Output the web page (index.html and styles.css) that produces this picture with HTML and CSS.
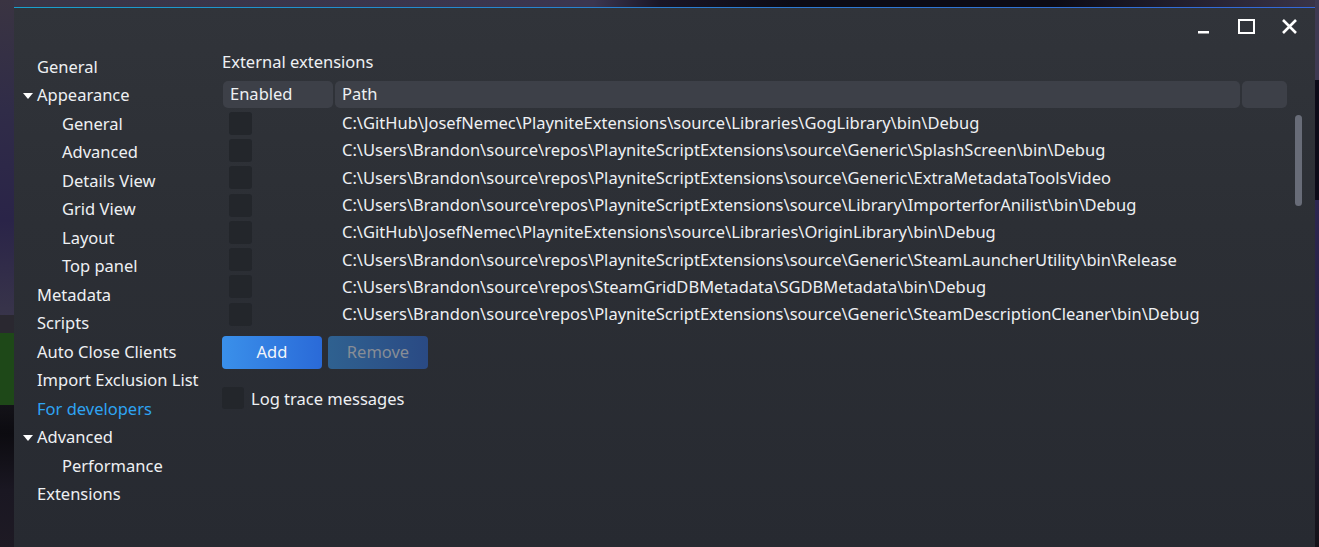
FILE: index.html
```html
<!DOCTYPE html>
<html>
<head>
<meta charset="utf-8">
<link rel="stylesheet" href="styles.css">
</head>
<body>
<div class="wall">
  <div class="wall-left">
    <div class="wl-a"></div><div class="wl-b"></div><div class="wl-c"></div><div class="wl-d"></div>
  </div>
  <div class="window">
    <div class="topline"></div>
    <div class="titlebar">
      <svg class="tb-icon" width="20" height="20" viewBox="0 0 20 20"><rect x="4" y="15" width="11" height="2.5" fill="#fff"/></svg>
      <svg class="tb-icon" width="20" height="20" viewBox="0 0 20 20"><rect x="2" y="4" width="15" height="13" fill="none" stroke="#fff" stroke-width="2"/></svg>
      <svg class="tb-icon" width="20" height="20" viewBox="0 0 20 20"><path d="M3 4 L16 17 M16 4 L3 17" stroke="#fff" stroke-width="2.6" fill="none"/></svg>
    </div>
    <div class="body">
      <nav class="sidebar">
        <div class="item l1">General</div>
        <div class="item l1 exp"><span class="caret"></span>Appearance</div>
        <div class="item l2">General</div>
        <div class="item l2">Advanced</div>
        <div class="item l2">Details View</div>
        <div class="item l2">Grid View</div>
        <div class="item l2">Layout</div>
        <div class="item l2">Top panel</div>
        <div class="item l1">Metadata</div>
        <div class="item l1">Scripts</div>
        <div class="item l1">Auto Close Clients</div>
        <div class="item l1">Import Exclusion List</div>
        <div class="item l1 sel">For developers</div>
        <div class="item l1 exp"><span class="caret"></span>Advanced</div>
        <div class="item l2">Performance</div>
        <div class="item l1">Extensions</div>
      </nav>
      <main class="main">
        <div class="section-title">External extensions</div>
        <div class="table-wrap">
          <div class="table">
            <div class="thead">
              <div class="th c1">Enabled</div>
              <div class="th c2">Path</div>
              <div class="th c3"></div>
            </div>
            <div class="row"><div class="c1"><span class="cb"></span></div><div class="c2">C:\GitHub\JosefNemec\PlayniteExtensions\source\Libraries\GogLibrary\bin\Debug</div></div>
            <div class="row"><div class="c1"><span class="cb"></span></div><div class="c2">C:\Users\Brandon\source\repos\PlayniteScriptExtensions\source\Generic\SplashScreen\bin\Debug</div></div>
            <div class="row"><div class="c1"><span class="cb"></span></div><div class="c2">C:\Users\Brandon\source\repos\PlayniteScriptExtensions\source\Generic\ExtraMetadataToolsVideo</div></div>
            <div class="row"><div class="c1"><span class="cb"></span></div><div class="c2">C:\Users\Brandon\source\repos\PlayniteScriptExtensions\source\Library\ImporterforAnilist\bin\Debug</div></div>
            <div class="row"><div class="c1"><span class="cb"></span></div><div class="c2">C:\GitHub\JosefNemec\PlayniteExtensions\source\Libraries\OriginLibrary\bin\Debug</div></div>
            <div class="row"><div class="c1"><span class="cb"></span></div><div class="c2">C:\Users\Brandon\source\repos\PlayniteScriptExtensions\source\Generic\SteamLauncherUtility\bin\Release</div></div>
            <div class="row"><div class="c1"><span class="cb"></span></div><div class="c2">C:\Users\Brandon\source\repos\SteamGridDBMetadata\SGDBMetadata\bin\Debug</div></div>
            <div class="row"><div class="c1"><span class="cb"></span></div><div class="c2">C:\Users\Brandon\source\repos\PlayniteScriptExtensions\source\Generic\SteamDescriptionCleaner\bin\Debug</div></div>
          </div>
          <div class="scrolltrack"><div class="thumb"></div></div>
        </div>
        <div class="buttons">
          <button class="btn add">Add</button>
          <button class="btn remove">Remove</button>
        </div>
        <label class="check"><span class="cb big"></span>Log trace messages</label>
      </main>
    </div>
  </div>
  <div class="wall-right">
    <div class="wr-a"></div><div class="wr-b"></div><div class="wr-c"></div>
  </div>
</div>
</body>
</html>
```
FILE: styles.css
```css
html, body {
  margin: 0;
  padding: 0;
  width: 1319px;
  height: 547px;
  overflow: hidden;
  background: #2c2838;
  font-family: "Noto Sans", "Open Sans", sans-serif;
}
.wall {
  display: flex;
  width: 1319px;
  height: 547px;
  background: linear-gradient(90deg, #3a3546 0%, #3b3650 45%, #1a1626 50%, #0c0b15 60%, #0c0b15 80%, #3a3548 100%);
}
.wall-left {
  width: 14px;
  display: flex;
  flex-direction: column;
}
.wl-a { height: 315px; background: linear-gradient(180deg, #3a3442 0%, #302c48 35%, #2a2448 70%, #38344a 100%); }
.wl-b { height: 18px; background: #2a2830; }
.wl-c { height: 72px; background: #1e4818; }
.wl-d { flex: 1; background: linear-gradient(180deg, #131218 0%, #0c0b10 20%, #1a1722 60%, #1e1a24 100%); }
.wall-right {
  width: 4px;
  display: flex;
  flex-direction: column;
}
.wr-a { height: 80px; background: #3e3a52; }
.wr-b { height: 120px; background: #0d0b18; }
.wr-c { flex: 1; background: linear-gradient(180deg, #2c2650 0%, #25213d 50%, #141218 100%); }

.window {
  width: 1301px;
  height: 540px;
  margin-top: 7px;
  background: linear-gradient(180deg, #31343a 0%, #2c2f35 40%, #272a31 100%);
  display: flex;
  flex-direction: column;
  color: #eef0f3;
}
.topline {
  height: 1px;
  background: linear-gradient(90deg, #1aa0cc 0%, #2a7ed0 50%, #3468d8 100%);
}
.titlebar {
  height: 37px;
  display: flex;
  justify-content: flex-end;
  align-items: flex-start;
  padding-top: 8px;
  padding-right: 15px;
  gap: 23px;
  box-sizing: border-box;
}
.tb-icon { display: block; }
.body {
  display: flex;
  flex: 1;
}
.sidebar {
  width: 208px;
  padding-top: 7.5px;
  font-size: 16.5px;
}
.item {
  height: 28.5px;
  line-height: 28.5px;
  white-space: nowrap;
  position: relative;
}
.l1 { padding-left: 23px; }
.l2 { padding-left: 48px; }
.sel { color: #2ea4f2; }
.caret {
  position: absolute;
  left: 9px;
  top: 12px;
  width: 0;
  height: 0;
  border-left: 5px solid transparent;
  border-right: 5px solid transparent;
  border-top: 6px solid #fff;
}
.main {
  flex: 1;
  font-size: 16.5px;
}
.section-title {
  height: 22px;
  line-height: 22px;
  margin-top: 6px;
  margin-bottom: 8px;
}
.table-wrap {
  display: flex;
  width: 1080px;
}
.table {
  width: 1065px;
}
.thead {
  display: flex;
  gap: 2px;
  height: 27px;
  margin-left: 1px;
  margin-bottom: 1.5px;
}
.th {
  background: #3d4048;
  border-radius: 5px;
  line-height: 26px;
  box-sizing: border-box;
  padding-left: 7px;
}
.thead .c1 { width: 110px; flex: none; }
.thead .c2 { width: 905px; flex: none; }
.thead .c3 { width: 45px; flex: none; }
.row {
  display: flex;
  height: 27.3px;
  align-items: center;
}
.row .c1 { width: 113px; padding-left: 7px; box-sizing: border-box; }
.row .c2 { padding-left: 7px; white-space: nowrap; line-height: 26px; }
.cb {
  display: block;
  width: 23px;
  height: 23px;
  background: #23262b;
  border-radius: 3px;
}
.scrolltrack {
  width: 15px;
  display: flex;
  justify-content: flex-end;
  padding-top: 34px;
}
.thumb {
  width: 7px;
  height: 91px;
  background: #686c78;
  border-radius: 4px;
}
.buttons {
  display: flex;
  gap: 6px;
  margin-top: 8px;
}
.btn {
  width: 100px;
  height: 33px;
  border: none;
  border-radius: 4px;
  font-family: inherit;
  font-size: 16.5px;
  padding: 0 0 2px 0;
}
.add {
  background: linear-gradient(90deg, #3a90ea 0%, #2a6ad8 100%);
  color: #f2f5fa;
}
.remove {
  background: linear-gradient(90deg, #2f6190 0%, #2a4a84 100%);
  color: #878d96;
}
.check {
  display: flex;
  align-items: center;
  gap: 7px;
  margin-top: 18px;
}
.cb.big { width: 22px; height: 22px; }
```
